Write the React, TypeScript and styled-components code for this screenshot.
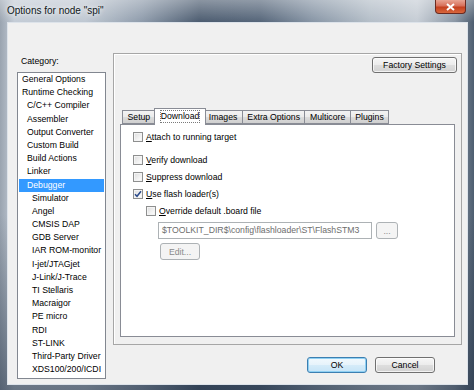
import React from 'react'
import styled, { createGlobalStyle } from 'styled-components'

const GlobalStyle = createGlobalStyle`
    html, body {
        margin: 0;
        padding: 0;
        background: #ffffff;
    }
    body {
        font-family: 'Liberation Sans', Arial, sans-serif;
        font-size: 8.7px;
        color: #000000;
    }
`

interface Category {
    label: string
    level: number
}

const categories: Category[] = [
    { label: 'General Options', level: 0 },
    { label: 'Runtime Checking', level: 0 },
    { label: 'C/C++ Compiler', level: 1 },
    { label: 'Assembler', level: 1 },
    { label: 'Output Converter', level: 1 },
    { label: 'Custom Build', level: 1 },
    { label: 'Build Actions', level: 1 },
    { label: 'Linker', level: 1 },
    { label: 'Debugger', level: 1 },
    { label: 'Simulator', level: 2 },
    { label: 'Angel', level: 2 },
    { label: 'CMSIS DAP', level: 2 },
    { label: 'GDB Server', level: 2 },
    { label: 'IAR ROM-monitor', level: 2 },
    { label: 'I-jet/JTAGjet', level: 2 },
    { label: 'J-Link/J-Trace', level: 2 },
    { label: 'TI Stellaris', level: 2 },
    { label: 'Macraigor', level: 2 },
    { label: 'PE micro', level: 2 },
    { label: 'RDI', level: 2 },
    { label: 'ST-LINK', level: 2 },
    { label: 'Third-Party Driver', level: 2 },
    { label: 'XDS100/200/ICDI', level: 2 },
]

const tabs = ['Setup', 'Download', 'Images', 'Extra Options', 'Multicore', 'Plugins']

const CheckMark = () => (
    <svg width="8" height="8" viewBox="0 0 8 8">
        <path d="M1 4.2 L3 6.3 L7 1.2" fill="none" stroke="#2a4a8a" strokeWidth="1.5" />
    </svg>
)

const App: React.FC = () => {
    return (
        <>
            <GlobalStyle />
            <Window>
                <TitleBar>
                    <Title>Options for node "spi"</Title>
                    <CloseButton>
                        <svg width="9" height="8" viewBox="0 0 9 8">
                            <path d="M1 1 L8 7 M8 1 L1 7" stroke="#ffffff" strokeWidth="2" />
                        </svg>
                    </CloseButton>
                </TitleBar>
                <Client>
                    <LeftColumn>
                        <CategoryLabel>Category:</CategoryLabel>
                        <ListBox>
                            {categories.map(c => (
                                <ListItem key={c.label} level={c.level} selected={c.label === 'Debugger'}>
                                    {c.label}
                                </ListItem>
                            ))}
                        </ListBox>
                    </LeftColumn>
                    <RightColumn>
                        <GroupBox>
                            <FactoryButton>Factory Settings</FactoryButton>
                            <TabStrip>
                                {tabs.map(t => (
                                    <Tab key={t} active={t === 'Download'}>
                                        {t === 'Download' ? <FocusText>{t}</FocusText> : t}
                                    </Tab>
                                ))}
                            </TabStrip>
                            <TabPanel>
                                <CheckRow>
                                    <CheckBox />
                                    <CheckText>
                                        <u>A</u>ttach to running target
                                    </CheckText>
                                </CheckRow>
                                <CheckRow gap={6}>
                                    <CheckBox />
                                    <CheckText>
                                        <u>V</u>erify download
                                    </CheckText>
                                </CheckRow>
                                <CheckRow>
                                    <CheckBox />
                                    <CheckText>
                                        <u>S</u>uppress download
                                    </CheckText>
                                </CheckRow>
                                <CheckRow>
                                    <CheckBox>
                                        <CheckMark />
                                    </CheckBox>
                                    <CheckText>
                                        <u>U</u>se flash loader(s)
                                    </CheckText>
                                </CheckRow>
                                <CheckRow indent={13}>
                                    <CheckBox />
                                    <CheckText>
                                        <u>O</u>verride default .board file
                                    </CheckText>
                                </CheckRow>
                                <PathRow>
                                    <PathField>{'$TOOLKIT_DIR$\\config\\flashloader\\ST\\FlashSTM3'}</PathField>
                                    <SmallButton disabled>...</SmallButton>
                                </PathRow>
                                <EditButton disabled>Edit...</EditButton>
                            </TabPanel>
                        </GroupBox>
                        <ButtonRow>
                            <DialogButton primary>OK</DialogButton>
                            <DialogButton>Cancel</DialogButton>
                        </ButtonRow>
                    </RightColumn>
                </Client>
            </Window>
        </>
    )
}

export default App

const Window = styled.div`
    width: 474px;
    height: 390px;
    overflow: hidden;
    display: flex;
    flex-direction: column;
    background:
        linear-gradient(180deg, rgba(255, 255, 255, 0.35) 0, rgba(255, 255, 255, 0) 22px),
        linear-gradient(180deg, rgba(0, 0, 0, 0) 55%, rgba(30, 45, 65, 0.55) 100%),
        linear-gradient(
            90deg,
            #9aa4b0 0%,
            #c4ccd6 3%,
            #bfc8d2 18%,
            #8e9bab 30%,
            #4c5c70 42%,
            #56667a 55%,
            #8896a6 66%,
            #b4bec8 78%,
            #c6cdd5 88%,
            #8a96a4 96%,
            #4e5e70 100%
        );
`

const TitleBar = styled.div`
    height: 22px;
    flex: none;
    display: flex;
    align-items: flex-start;
    padding-left: 7px;
`

const Title = styled.div`
    margin-top: 5px;
    font-size: 10px;
    line-height: 12px;
    color: #101820;
    text-shadow: 0 0 4px rgba(255, 255, 255, 0.9), 0 0 8px rgba(255, 255, 255, 0.7);
`

const CloseButton = styled.div`
    margin-left: auto;
    margin-right: 8px;
    width: 31px;
    height: 14px;
    box-sizing: border-box;
    border: 1px solid #6a2a20;
    border-top: none;
    border-radius: 0 0 4px 4px;
    background: linear-gradient(180deg, #e8a493 0%, #d7705a 45%, #c4401f 55%, #d8673c 100%);
    display: flex;
    align-items: center;
    justify-content: center;
`

const Client = styled.div`
    flex: none;
    height: 363px;
    margin: 0 6px 0 7px;
    box-sizing: border-box;
    background: #f0f0f0;
    border: 1px solid #dde3ea;
    display: flex;
    align-items: flex-start;
    padding-top: 30px;
`

const LeftColumn = styled.div`
    margin-left: 9px;
    width: 89px;
    display: flex;
    flex-direction: column;
    padding-top: 2px;
`

const CategoryLabel = styled.div`
    height: 12px;
    line-height: 12px;
    padding-left: 4px;
    margin-bottom: 5px;
`

const ListBox = styled.div`
    height: 307px;
    box-sizing: border-box;
    border: 1px solid #828790;
    background: #ffffff;
    padding-top: 0px;
`

const ListItem = styled.div<{ level: number; selected?: boolean }>`
    height: 13.2px;
    line-height: 13.2px;
    margin: 0 1px;
    padding-left: ${props => props.level * 5 + 3}px;
    white-space: nowrap;
    background: ${props => (props.selected ? '#3399ff' : 'transparent')};
    color: ${props => (props.selected ? '#ffffff' : '#000000')};
`

const RightColumn = styled.div`
    margin-left: 7px;
    width: 349px;
    display: flex;
    flex-direction: column;
`

const GroupBox = styled.div`
    height: 292px;
    box-sizing: border-box;
    border: 1px solid #a6a6a6;
    box-shadow: inset 1px 1px 0 #ffffff;
    display: flex;
    flex-direction: column;
`

const ButtonBase = styled.button`
    font-family: 'Liberation Sans', Arial, sans-serif;
    font-size: 8.7px;
    color: #000000;
    box-sizing: border-box;
    border: 1px solid #707070;
    border-radius: 3px;
    background: linear-gradient(180deg, #f6f6f6 0%, #ececec 50%, #dedede 50%, #d2d2d2 100%);
    box-shadow: inset 0 0 0 1px rgba(255, 255, 255, 0.7);
    padding: 0;
    display: flex;
    align-items: center;
    justify-content: center;
    &:disabled {
        color: #8a8a8a;
        border-color: #adb2b5;
        background: #f4f4f4;
        box-shadow: none;
    }
`

const FactoryButton = styled(ButtonBase)`
    align-self: flex-end;
    margin: 3px 4px 0 0;
    width: 85px;
    height: 16px;
`

const TabStrip = styled.div`
    margin: 35px 6px 0 6px;
    padding-left: 2px;
    height: 16px;
    display: flex;
    align-items: flex-end;
    position: relative;
    z-index: 1;
`

const Tab = styled.div<{ active?: boolean }>`
    box-sizing: border-box;
    height: ${props => (props.active ? '17px' : '14px')};
    margin: ${props => (props.active ? '0 -2px -1px -2px' : '0')};
    padding: ${props => (props.active ? '0 6px' : '0 4.5px')};
    border: 1px solid #898c95;
    border-bottom: ${props => (props.active ? 'none' : '1px solid #898c95')};
    border-left-width: ${props => (props.active ? '1px' : '0')};
    background: ${props => (props.active ? '#ffffff' : 'linear-gradient(180deg, #f3f3f3 0%, #ebebeb 50%, #dddddd 51%, #cfcfcf 100%)')};
    position: relative;
    z-index: ${props => (props.active ? 2 : 1)};
    display: flex;
    align-items: center;
    white-space: nowrap;
    &:first-child {
        border-left-width: 1px;
    }
`

const FocusText = styled.span`
    outline: 1px dotted #7a7a7a;
    outline-offset: 0px;
    line-height: 11px;
    margin-top: -2px;
`

const TabPanel = styled.div`
    height: 213px;
    margin: 0 6px;
    box-sizing: border-box;
    border: 1px solid #898c95;
    background: #ffffff;
    padding: 3px 0 0 12px;
    display: flex;
    flex-direction: column;
    align-items: flex-start;
`

const CheckRow = styled.div<{ gap?: number; indent?: number }>`
    height: 17px;
    display: flex;
    align-items: center;
    margin-top: ${props => props.gap || 0}px;
    padding-left: ${props => props.indent || 0}px;
`

const CheckBox = styled.span`
    width: 10px;
    height: 10px;
    box-sizing: border-box;
    border: 1px solid #8e8f8f;
    background: linear-gradient(135deg, #dcdcdc 0%, #f2f2f2 60%, #ffffff 100%);
    box-shadow: inset 0 0 0 1px #f4f4f4;
    display: flex;
    align-items: center;
    justify-content: center;
    margin-right: 3px;
`

const CheckText = styled.span`
    line-height: 12px;
    white-space: nowrap;
`

const PathRow = styled.div`
    margin: 3px 0 0 25px;
    display: flex;
    align-items: center;
`

const PathField = styled.div`
    width: 214px;
    height: 17px;
    box-sizing: border-box;
    border: 1px solid #adb2b5;
    background: #ffffff;
    color: #6d6d6d;
    line-height: 15px;
    padding-left: 3px;
    overflow: hidden;
    white-space: nowrap;
`

const SmallButton = styled(ButtonBase)`
    width: 22px;
    height: 17px;
    margin-left: 4px;
`

const EditButton = styled(ButtonBase)`
    width: 40px;
    height: 17px;
    margin: 4px 0 0 27px;
`

const ButtonRow = styled.div`
    display: flex;
    justify-content: flex-end;
    gap: 8px;
    margin-top: 12px;
    padding-right: 27px;
`

const DialogButton = styled(ButtonBase)<{ primary?: boolean }>`
    width: 60px;
    height: 16px;
    ${props =>
        props.primary &&
        `
        border-color: #3c7fb1;
        background: linear-gradient(180deg, #f2f9fd 0%, #e6f3fb 50%, #d6ecf9 50%, #c6e4f7 100%);
        box-shadow: inset 0 0 0 1px #8fd0f3;
    `}
`
